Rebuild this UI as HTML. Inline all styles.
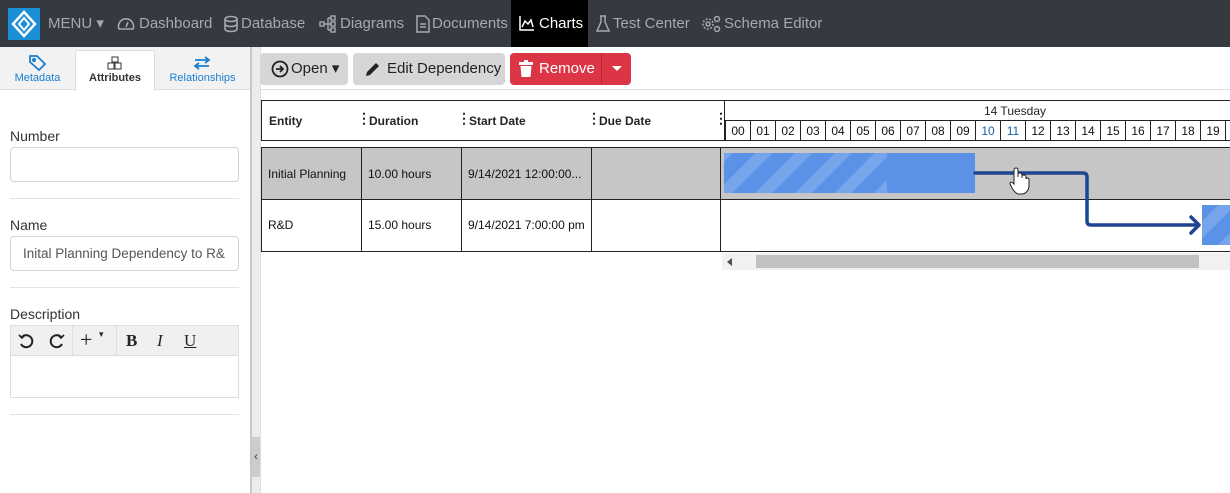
<!DOCTYPE html>
<html><head><style>
*{box-sizing:border-box;margin:0;padding:0}
body{width:1230px;height:493px;overflow:hidden;font-family:"Liberation Sans",sans-serif;background:#fff;position:relative;font-size:14px;color:#212529}
.nav{position:absolute;left:0;top:0;width:1230px;height:47px;background:#343a40}
.ni{position:absolute;top:0;height:47px;line-height:47px;color:#a6a9ad;font-size:15px}
.ic{position:absolute;top:15px}
.abs{position:absolute}
.tab{position:absolute;top:50px;height:40px;font-size:11px;text-align:center}
.lbl{position:absolute;left:10px;font-size:14px;color:#333}
.inp{position:absolute;left:10px;width:229px;height:35px;border:1px solid #ced4da;border-radius:4px;background:#fff;font-size:13.5px;color:#555;padding:9px 12px;white-space:nowrap;overflow:hidden}
.hr{position:absolute;left:10px;width:229px;border-top:1px solid #e3e3e3}
.btn{position:absolute;top:53px;height:32px;border-radius:4px;line-height:32px;font-size:15px}
.cell{position:absolute;font-size:12px;color:#111;line-height:52px;padding-left:6px;border-right:1px solid #222;white-space:nowrap}
.hh{position:absolute;top:120px;width:25px;height:20px;border-left:1px solid #222;font-size:12px;text-align:center;line-height:22px}
</style></head><body>
<div class="nav">
 <div class="abs" style="left:8px;top:8px;width:32px;height:32px;background:#1a8fd6">
  <svg width="32" height="32"><path d="M16 4 L27 16 L16 28 L5 16 Z" fill="none" stroke="#fff" stroke-width="2.5"/><path d="M16 10 L21 16 L16 22 L11 16 Z" fill="none" stroke="#fff" stroke-width="2"/></svg></div>
 <div class="ni" style="left:48px">MENU ▾</div>
 <svg class="ic" style="left:117px" width="18" height="18" fill="none" stroke="#a6a9ad" stroke-width="1.6"><path d="M2 14 A7.5 7.5 0 1 1 16 14 Z"/><path d="M9 12 L11 7"/></svg>
 <div class="ni" style="left:139px">Dashboard</div>
 <svg class="ic" style="left:223px" width="16" height="18" fill="none" stroke="#a6a9ad" stroke-width="1.6"><ellipse cx="8" cy="4" rx="6" ry="2.5"/><path d="M2 4 V14 A6 2.5 0 0 0 14 14 V4 M2 9 A6 2.5 0 0 0 14 9"/></svg>
 <div class="ni" style="left:241px">Database</div>
 <svg class="ic" style="left:319px" width="18" height="18" fill="none" stroke="#a6a9ad" stroke-width="1.4"><rect x="1" y="7" width="4" height="4"/><rect x="12" y="1" width="4" height="4"/><rect x="12" y="7" width="4" height="4"/><rect x="12" y="13" width="4" height="4"/><path d="M5 9 H9 M9 3 V15 M9 3 H12 M9 9 H12 M9 15 H12"/></svg>
 <div class="ni" style="left:340px">Diagrams</div>
 <svg class="ic" style="left:416px" width="14" height="18" fill="none" stroke="#a6a9ad" stroke-width="1.5"><path d="M1 1 H9 L13 5 V17 H1 Z M4 9 H10 M4 12 H10"/></svg>
 <div class="ni" style="left:432px">Documents</div>
 <div class="abs" style="left:511px;top:0;width:77px;height:47px;background:#000"></div>
 <svg class="ic" style="left:519px" width="16" height="16" fill="none" stroke="#fff" stroke-width="1.5"><path d="M1 1 V15 H15 M3 12 L6 6 L9 9 L12 5 L14 12"/></svg>
 <div class="ni" style="left:539px;color:#fff">Charts</div>
 <svg class="ic" style="left:596px" width="14" height="18" fill="none" stroke="#a6a9ad" stroke-width="1.5"><path d="M4 1 H10 M5 1 V7 L1 16 H13 L9 7 V1"/></svg>
 <div class="ni" style="left:613px">Test Center</div>
 <svg class="ic" style="left:701px" width="20" height="18" fill="none" stroke="#a6a9ad" stroke-width="1.5"><circle cx="7" cy="9" r="5" stroke-dasharray="2 1.5"/><circle cx="7" cy="9" r="2"/><circle cx="16" cy="4" r="2.5"/><circle cx="16" cy="14" r="2.5"/></svg>
 <div class="ni" style="left:724px">Schema Editor</div>
</div>
<!-- left panel -->
<div class="abs" style="left:0;top:47px;width:250px;height:43px;background:#f2f2f2;border-bottom:1px solid #ddd"></div>
<svg class="abs" style="left:29px;top:55px" width="18" height="16" fill="none" stroke="#1a7fd0" stroke-width="1.8"><path d="M1 1 H8 L16 9 L10 15 L1 7 Z"/><circle cx="5" cy="5" r="1.2"/></svg>
<div class="tab" style="left:0;width:75px;color:#1a7fd0;top:72px">Metadata</div>
<div class="abs" style="left:75px;top:50px;width:80px;height:41px;background:#fff;border:1px solid #ddd;border-bottom:none;border-radius:3px 3px 0 0"></div>
<svg class="abs" style="left:107px;top:56px" width="16" height="14" fill="none" stroke="#444" stroke-width="1.1"><rect x="5" y="1" width="6" height="5"/><rect x="1" y="7" width="6" height="6"/><rect x="8" y="7" width="6" height="6"/></svg>
<div class="tab" style="left:75px;width:80px;color:#333;font-weight:bold;top:72px">Attributes</div>
<svg class="abs" style="left:193px;top:56px" width="18" height="14" fill="none" stroke="#1a7fd0" stroke-width="1.8"><path d="M2 4 H16 M12 1 L16 4 L12 7 M16 10 H2 M6 7 L2 10 L6 13"/></svg>
<div class="tab" style="left:155px;width:95px;color:#1a7fd0;top:72px">Relationships</div>
<div class="lbl" style="top:128px">Number</div>
<div class="inp" style="top:147px"></div>
<div class="hr" style="top:198px"></div>
<div class="lbl" style="top:217px">Name</div>
<div class="inp" style="top:236px">Inital Planning Dependency to R&amp;</div>
<div class="hr" style="top:287px"></div>
<div class="lbl" style="top:306px">Description</div>
<div class="abs" style="left:10px;top:325px;width:229px;height:73px;border:1px solid #ddd"></div>
<div class="abs" style="left:11px;top:326px;width:227px;height:30px;background:#f0f0f0;border-bottom:1px solid #ddd;font-size:17px;font-family:'Liberation Serif',serif">
 <svg class="abs" style="left:7px;top:7px" width="16" height="16" fill="none" stroke="#222" stroke-width="2"><path d="M4 4 A6 6 0 1 1 3 11"/><path d="M1 2 L4 5 L7 2" stroke-width="1.6"/></svg>
 <svg class="abs" style="left:38px;top:7px" width="16" height="16" fill="none" stroke="#222" stroke-width="2"><path d="M12 4 A6 6 0 1 0 13 11"/><path d="M9 2 L12 5 L15 2" stroke-width="1.6"/></svg>
 <span class="abs" style="left:61px;top:0;height:30px;border-left:1px solid #ddd"></span>
 <span class="abs" style="left:69px;top:1px;font-size:22px">+</span><span class="abs" style="left:88px;top:3px;font-size:9px">▾</span>
 <span class="abs" style="left:105px;top:0;height:30px;border-left:1px solid #ddd"></span>
 <span class="abs" style="left:115px;top:5px;font-weight:bold">B</span><span class="abs" style="left:146px;top:5px;font-style:italic">I</span><span class="abs" style="left:173px;top:5px;text-decoration:underline">U</span>
</div>
<div class="hr" style="top:414px"></div>
<!-- divider -->
<div class="abs" style="left:250px;top:47px;width:10px;height:446px;background:#ececec;border-left:2px solid #c8c8c8"></div>
<div class="abs" style="left:252px;top:437px;width:8px;height:40px;background:#ccc;font-size:11px;line-height:40px;text-align:center;color:#333">‹</div>
<div class="abs" style="left:260px;top:47px;width:970px;height:446px;border-left:1px solid #ddd"></div>
<!-- toolbar -->
<div class="btn" style="left:260px;width:88px;background:#d6d6d6;color:#222;padding-left:31px">Open ▾</div>
<svg class="abs" style="left:271px;top:60px" width="18" height="18" fill="none" stroke="#222" stroke-width="1.8"><circle cx="9" cy="9" r="7.5"/><path d="M5 9 H12 M9 6 L12 9 L9 12"/></svg>
<div class="btn" style="left:353px;width:152px;background:#d6d6d6;color:#222;padding-left:34px">Edit Dependency</div>
<svg class="abs" style="left:364px;top:60px" width="18" height="18"><path d="M2 16 L3 12 L12 3 L15 6 L6 15 Z" fill="#222"/></svg>
<div class="btn" style="left:510px;width:121px;background:#dc3545;color:#fff;padding-left:29px">Remove</div>
<svg class="abs" style="left:519px;top:60px" width="14" height="18"><rect x="0" y="2" width="14" height="3" fill="#fff"/><rect x="5" y="0" width="4" height="3" fill="#fff"/><path d="M1.5 6 H12.5 L11.5 17 H2.5 Z" fill="#fff"/></svg>
<div class="abs" style="left:601px;top:53px;height:32px;border-left:1px solid #b52a37"></div>
<svg class="abs" style="left:612px;top:66px" width="10" height="6"><path d="M0 0 H10 L5 5 Z" fill="#fff"/></svg>
<div class="abs" style="left:261px;top:89px;width:969px;border-top:1px solid #ddd"></div>
<!-- grid header -->
<div class="abs" style="left:261px;top:100px;width:969px;height:41px;border:1px solid #222;border-right:none"></div>
<div class="abs" style="left:724px;top:100px;height:41px;border-left:1px solid #222"></div>
<div class="abs" style="left:725px;top:120px;width:505px;border-top:1px solid #222"></div>
<div class="abs" style="left:725px;top:104px;width:580px;text-align:center;font-size:12px">14 Tuesday</div>
<div class="abs" style="left:269px;top:114px;font-size:12px;font-weight:bold">Entity</div>
<div class="abs" style="left:357px;top:110px;font-size:14px;font-weight:bold">⋮</div>
<div class="abs" style="left:369px;top:114px;font-size:12px;font-weight:bold">Duration</div>
<div class="abs" style="left:457px;top:110px;font-size:14px;font-weight:bold">⋮</div>
<div class="abs" style="left:469px;top:114px;font-size:12px;font-weight:bold">Start Date</div>
<div class="abs" style="left:587px;top:110px;font-size:14px;font-weight:bold">⋮</div>
<div class="abs" style="left:599px;top:114px;font-size:12px;font-weight:bold">Due Date</div>
<div class="abs" style="left:714px;top:110px;font-size:14px;font-weight:bold">⋮</div>
<div id="hrs"></div>
<script>
var s='';for(var i=0;i<21;i++){var c=i==10||i==11?'#1560a8':'#111';s+='<div class="hh" style="left:'+(725+i*25)+'px;color:'+c+'">'+(i<10?'0':'')+i+'</div>';}document.getElementById('hrs').innerHTML=s;
</script>
<!-- rows -->
<div class="abs" style="left:261px;top:147px;width:969px;height:105px;border:1px solid #222;border-right:none"></div>
<div class="abs" style="left:262px;top:148px;width:968px;height:51px;background:#c6c6c6"></div>
<div class="abs" style="left:262px;top:199px;width:968px;border-top:1px solid #222"></div>
<div class="cell" style="left:262px;top:148px;width:100px">Initial Planning</div>
<div class="cell" style="left:362px;top:148px;width:100px">10.00 hours</div>
<div class="cell" style="left:462px;top:148px;width:130px">9/14/2021 12:00:00...</div>
<div class="cell" style="left:592px;top:148px;width:129px;height:51px"></div>
<div class="cell" style="left:262px;top:200px;width:100px;line-height:51px">R&amp;D</div>
<div class="cell" style="left:362px;top:200px;width:100px;line-height:51px">15.00 hours</div>
<div class="cell" style="left:462px;top:200px;width:130px;line-height:51px">9/14/2021 7:00:00 pm</div>
<div class="cell" style="left:592px;top:200px;width:129px;height:51px"></div>
<svg class="abs" style="left:721px;top:148px" width="509" height="104">
 <defs><pattern id="h" width="28" height="28" patternUnits="userSpaceOnUse" patternTransform="rotate(45)"><rect width="28" height="28" fill="#5b92e8"/><rect width="12" height="28" fill="#77a5ec"/></pattern></defs>
 <rect x="3" y="5" width="163" height="40" fill="url(#h)"/>
 <rect x="166" y="5" width="88" height="40" fill="#5b92e8"/>
 <rect x="481" y="57" width="28" height="40" fill="url(#h)"/>
 <path d="M254 25 H362 Q366 25 366 29 V73 Q366 77 370 77 H478 M470 69 L478 77 L470 85" fill="none" stroke="#1f4490" stroke-width="3.5" stroke-linecap="round" stroke-linejoin="round"/>
 <path d="M293 36 V22 Q293 20 295 20 Q297 20 297 22 V29 V26 Q297 25 299 25 Q301 25 301 27 V30 V28 Q301 27 303 27 Q305 27 305 29 V31 Q305 30 306.5 30 Q308 30 308 32 V37 Q308 44 302 46 H297 Q294 45 291 40 L289 36 Q289 33 292 35 Z" fill="#fff" stroke="#222" stroke-width="1"/>
</svg>
<!-- scrollbar -->
<div class="abs" style="left:722px;top:253px;width:508px;height:17px;background:#f1f1f1"></div>
<div class="abs" style="left:756px;top:255px;width:443px;height:13px;background:#c1c1c1"></div>
<svg class="abs" style="left:727px;top:258px" width="6" height="8"><path d="M5 0 V8 L0 4 Z" fill="#505050"/></svg>
</body></html>
